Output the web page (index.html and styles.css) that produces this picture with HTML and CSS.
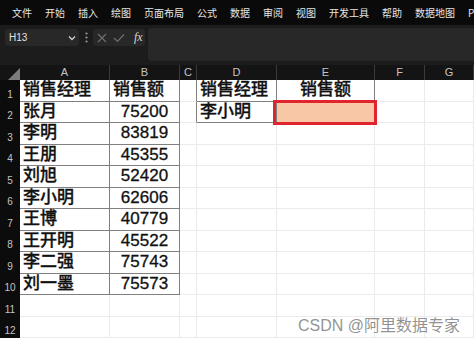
FILE: index.html
```html
<!DOCTYPE html>
<html lang="zh-CN">
<head>
  <meta charset="UTF-8" />
  <title>销售表</title>
  <link rel="stylesheet" href="styles.css">
</head>
<body>

<div class="menubar">
  <span>文件</span><span>开始</span><span>插入</span><span>绘图</span><span>页面布局</span><span>公式</span>
  <span>数据</span><span>审阅</span><span>视图</span><span>开发工具</span><span>帮助</span><span>数据地图</span><span>P</span>
</div>

<div class="formulabar">
  <div class="namebox">
    <span>H13</span>
    <svg width="8" height="6" viewBox="0 0 8 6"><path d="M1 1.5 L4 4.5 L7 1.5" fill="none" stroke="#cfcfcf" stroke-width="1.3"/></svg>
  </div>
  <svg class="dots" width="3" height="11" viewBox="0 0 3 11"><circle cx="1.5" cy="1.5" r="1.1" fill="#9a9a9a"/><circle cx="1.5" cy="5.5" r="1.1" fill="#9a9a9a"/><circle cx="1.5" cy="9.5" r="1.1" fill="#9a9a9a"/></svg>
  <div class="fxbox">
    <svg width="10" height="10" viewBox="0 0 10 10"><path d="M1 1 L9 9 M9 1 L1 9" stroke="#6e6e6e" stroke-width="1.2"/></svg>
    <svg width="12" height="10" viewBox="0 0 12 10"><path d="M1 5 L4.5 8.5 L11 1.5" fill="none" stroke="#6e6e6e" stroke-width="1.2"/></svg>
    <span class="fx">fx</span>
  </div>
  <div class="formula-input"></div>
</div>

<table class="sheet">
  <colgroup>
    <col class="c-row"><col class="c-a"><col class="c-b"><col class="c-c"><col class="c-d"><col class="c-e"><col class="c-f"><col>
  </colgroup>
  <tr class="colhead">
    <th class="corner"><span class="tri"></span></th><th>A</th><th>B</th><th>C</th><th>D</th><th>E</th><th>F</th><th>G</th>
  </tr>
  <tr>
    <th>1</th><td class="box">销售经理</td><td class="box">销售额</td><td class="edge"></td>
    <td class="box">销售经理</td><td class="box num">销售额</td><td></td><td></td>
  </tr>
  <tr>
    <th>2</th><td class="box">张月</td><td class="box num">75200</td><td class="edge"></td>
    <td class="box">李小明</td><td class="box target"></td><td></td><td></td>
  </tr>
  <tr><th>3</th><td class="box">李明</td><td class="box num">83819</td><td></td><td></td><td></td><td></td><td></td></tr>
  <tr><th>4</th><td class="box">王朋</td><td class="box num">45355</td><td></td><td></td><td></td><td></td><td></td></tr>
  <tr><th>5</th><td class="box">刘旭</td><td class="box num">52420</td><td></td><td></td><td></td><td></td><td></td></tr>
  <tr><th>6</th><td class="box">李小明</td><td class="box num">62606</td><td></td><td></td><td></td><td></td><td></td></tr>
  <tr><th>7</th><td class="box">王博</td><td class="box num">40779</td><td></td><td></td><td></td><td></td><td></td></tr>
  <tr><th>8</th><td class="box">王开明</td><td class="box num">45522</td><td></td><td></td><td></td><td></td><td></td></tr>
  <tr><th>9</th><td class="box">李二强</td><td class="box num">75743</td><td></td><td></td><td></td><td></td><td></td></tr>
  <tr><th>10</th><td class="box">刘一墨</td><td class="box num">75573</td><td></td><td></td><td></td><td></td><td></td></tr>
  <tr><th>11</th><td></td><td></td><td></td><td></td><td></td><td></td><td></td></tr>
  <tr><th>12</th><td></td><td></td><td></td><td></td><td></td><td></td><td></td></tr>
</table>

<div class="watermark">CSDN @阿里数据专家</div>

</body>
</html>
```

FILE: styles.css
```css
body {
  margin: 0;
  background: #fff;
  font-family: 'Liberation Sans', 'Noto Sans CJK SC', sans-serif;
  overflow: hidden;
}

.menubar {
  height: 25px;
  background-color: #0a0a0a;
  display: flex;
  align-items: center;
  gap: 13px;
  padding-left: 12px;
  font-family: 'Noto Sans CJK SC', sans-serif;
  font-size: 10px;
  color: #e6e6e6;
  white-space: nowrap;
  overflow: hidden;
}

.formulabar {
  height: 40px;
  background-color: #1c1c1c;
  display: flex;
  align-items: flex-start;
  padding: 4px 0 0 5px;
  box-sizing: border-box;
}

.namebox {
  width: 74px;
  height: 17px;
  background-color: #282828;
  border-radius: 4px;
  display: flex;
  align-items: center;
  justify-content: space-between;
  padding: 0 3px 0 4px;
  box-sizing: border-box;
  font-size: 10px;
  color: #e0e0e0;
}

.dots {
  margin: 3px 5px 0 6px;
}

.fxbox {
  width: 52px;
  height: 17px;
  background-color: #282828;
  border-radius: 4px;
  display: flex;
  align-items: center;
  gap: 6px;
  padding-left: 4px;
  box-sizing: border-box;
}

.fx {
  margin-left: 3px;
  font-family: 'Liberation Serif', serif;
  font-style: italic;
  font-size: 12px;
  color: #d8d8d8;
}

.formula-input {
  flex: 1;
  height: 33px;
  margin: -1px 0 0 3px;
  background-color: #282828;
  border-radius: 4px 0 0 4px;
}

.sheet {
  width: 100%;
  table-layout: fixed;
  border-collapse: separate;
  border-spacing: 0;
}

.c-row { width: 20px; }
.c-a { width: 90px; }
.c-b { width: 70px; }
.c-c { width: 17px; }
.c-d { width: 80px; }
.c-e { width: 98px; }
.c-f { width: 50px; }

.sheet tr {
  height: 21.5px;
}

.sheet th {
  padding: 0 0 1px;
  background-color: #0c0c0c;
  color: #c4c4c4;
  font-size: 10px;
  font-weight: normal;
  vertical-align: bottom;
  line-height: 12px;
}

.sheet tr.colhead {
  height: 15px;
}

.sheet .colhead th {
  height: 15px;
  padding: 0;
  background-color: #141414;
  border-right: 1px solid #3a3a3a;
  font-size: 11px;
  color: #c4c4c4;
  line-height: 15px;
  vertical-align: middle;
}

.sheet .colhead th.corner {
  position: relative;
  border-right: none;
}

.tri {
  position: absolute;
  right: 0;
  bottom: 0;
  border-left: 12px solid transparent;
  border-bottom: 12px solid #7c7c7c;
}

.sheet td {
  padding: 0 0 0 3px;
  border-right: 1px solid #ebebeb;
  border-bottom: 1px solid #ebebeb;
  font-size: 17px;
  font-weight: 500;
  -webkit-text-stroke: 0.3px #111;
  line-height: 20px;
  color: #111;
  white-space: nowrap;
  overflow: visible;
}

.sheet td.box {
  border-right-color: #808080;
  border-bottom-color: #808080;
}

.sheet td.edge {
  border-right-color: #808080;
}

.sheet td.num {
  text-align: center;
  padding-left: 0;
}

.sheet td.target {
  position: relative;
  background-color: #f8c8a6;
}

.target::after {
  content: '';
  position: absolute;
  top: -2px;
  left: -4px;
  right: -3px;
  bottom: -3px;
  border: 3px solid #e1252f;
}

.watermark {
  position: absolute;
  left: 298px;
  top: 312px;
  font-size: 16px;
  color: rgba(110, 110, 110, 0.75);
  white-space: nowrap;
}
```
